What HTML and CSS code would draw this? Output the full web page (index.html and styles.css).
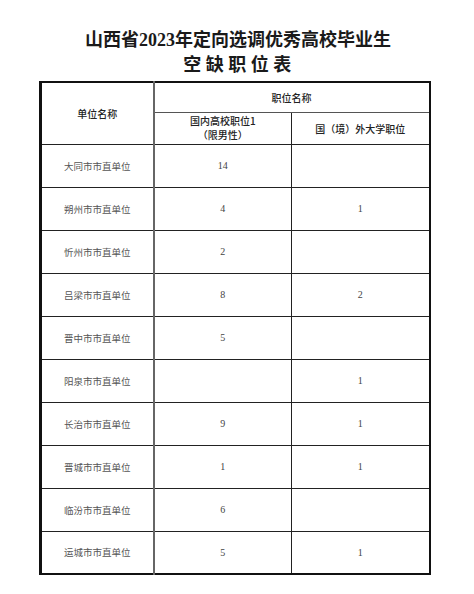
FILE: index.html
```html
<!DOCTYPE html>
<html lang="zh-CN">
<head>
<meta charset="utf-8">
<link rel="stylesheet" href="styles.css">
</head>
<body>
<div class="page">
  <h1 class="title">
    <span class="line1">山西省<span class="num">2023</span>年定向选调优秀高校毕业生</span>
    <span class="line2">空缺职位表</span>
  </h1>
  <table class="grid">
    <colgroup>
      <col class="c1"><col class="c2"><col class="c3">
    </colgroup>
    <thead>
      <tr class="h1">
        <th rowspan="2" class="unit-h">单位名称</th>
        <th colspan="2" class="top-h">职位名称</th>
      </tr>
      <tr class="h2">
        <th class="sub-h col2"><span class="hl">国内高校职位1</span><span class="hl">（限男性）</span></th>
        <th class="sub-h">国（境）外大学职位</th>
      </tr>
    </thead>
    <tbody>
      <tr><td class="name">大同市市直单位</td><td class="n col2">14</td><td class="n"></td></tr>
      <tr><td class="name">朔州市市直单位</td><td class="n col2">4</td><td class="n">1</td></tr>
      <tr><td class="name">忻州市市直单位</td><td class="n col2">2</td><td class="n"></td></tr>
      <tr><td class="name">吕梁市市直单位</td><td class="n col2">8</td><td class="n">2</td></tr>
      <tr><td class="name">晋中市市直单位</td><td class="n col2">5</td><td class="n"></td></tr>
      <tr><td class="name">阳泉市市直单位</td><td class="n col2"></td><td class="n">1</td></tr>
      <tr><td class="name">长治市市直单位</td><td class="n col2">9</td><td class="n">1</td></tr>
      <tr><td class="name">晋城市市直单位</td><td class="n col2">1</td><td class="n">1</td></tr>
      <tr><td class="name">临汾市市直单位</td><td class="n col2">6</td><td class="n"></td></tr>
      <tr><td class="name">运城市市直单位</td><td class="n col2">5</td><td class="n">1</td></tr>
    </tbody>
  </table>
</div>
</body>
</html>
```
FILE: styles.css
```css
html, body {
  margin: 0;
  padding: 0;
  background: #ffffff;
}
.page {
  width: 474px;
  height: 594px;
  padding-top: 27px;
  box-sizing: border-box;
}
.title {
  margin: 0;
  font-family: "Noto Sans CJK SC", sans-serif;
  font-weight: 700;
  font-size: 18px;
  line-height: 23px;
  color: #1a1a1a;
  text-align: center;
  display: flex;
  flex-direction: column;
  align-items: center;
}
.title .num {
  font-family: "Liberation Serif", serif;
}
.line1 {
  display: block;
  padding-left: 2px;
}
.line2 {
  display: block;
  letter-spacing: 4.5px;
  padding-left: 5px;
}
.grid {
  margin: 6px 0 0 39px;
  width: 391px;
  border-collapse: collapse;
  table-layout: fixed;
  border-top: 2px solid #111;
  border-right: 2px solid #111;
  border-bottom: 2px solid #111;
  border-left: 3px solid #111;
}
.c1 { width: 113px; }
.c2 { width: 138px; }
.c3 { width: 138px; }
th, td {
  padding: 0;
  text-align: center;
  vertical-align: middle;
}
th {
  font-family: "Noto Sans CJK SC", sans-serif;
  font-weight: 500;
  font-size: 10px;
  line-height: 13px;
  color: #222;
}
.hl {
  display: block;
  line-height: 14px;
}
.unit-h {
  border-right: 2px solid #666;
  border-bottom: 1px solid #222;
}
.h1 { height: 30px; }
.top-h {
  border-bottom: 1px solid #555;
}
.h2 { height: 32px; }
.sub-h {
  border-bottom: 1px solid #222;
}
.col2 {
  border-right: 1px solid #222;
}
tbody tr {
  height: 43px;
}
tbody td {
  border-bottom: 1px solid #222;
}
tbody tr:last-child td {
  border-bottom: none;
}
.name {
  border-right: 2px solid #666;
  font-family: "Noto Sans CJK SC", sans-serif;
  font-size: 9.5px;
  color: #555;
}
.n {
  font-family: "Liberation Serif", serif;
  font-size: 10px;
  color: #444;
}
```
